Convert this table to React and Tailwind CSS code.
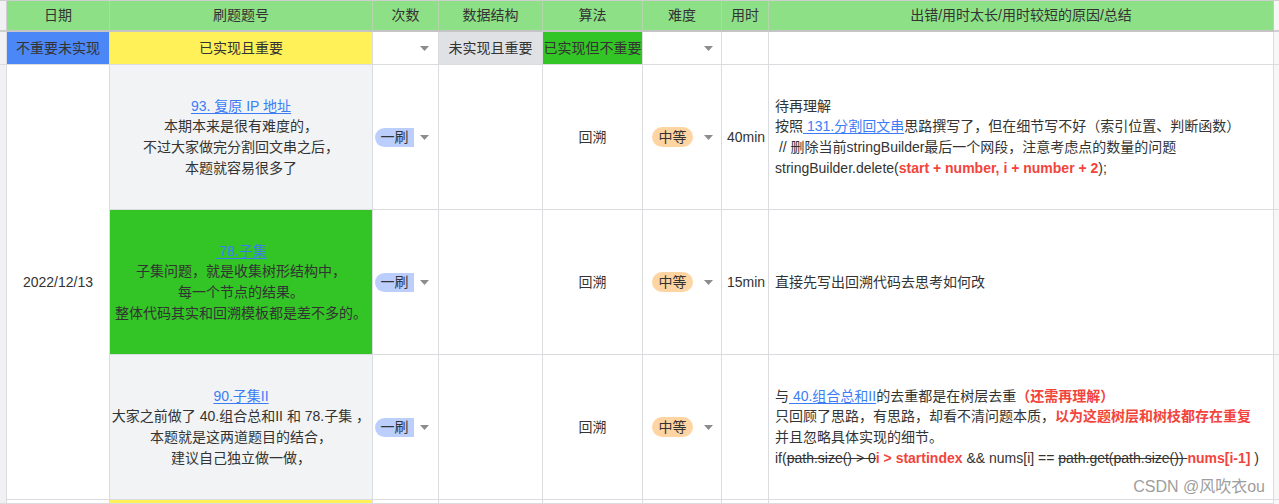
import React from 'react';

const FONT = "font-['Liberation_Sans','Noto_Sans_CJK_SC',sans-serif]";
const LINE = 'border-r border-b border-[#dadce0]';

const HEADERS = ['日期', '刷题题号', '次数', '数据结构', '算法', '难度', '用时', '出错/用时太长/用时较短的原因/总结'];

function Caret() {
  return (
    <svg width="9" height="5" viewBox="0 0 9 5" className="shrink-0">
      <polygon points="0,0 9,0 4.5,5" fill="#8c8c8c" />
    </svg>
  );
}

function Link({ children }) {
  return <span className="text-[#3c7df6] underline underline-offset-2">{children}</span>;
}

function Red({ children }) {
  return <span className="font-bold text-[#f2443c]">{children}</span>;
}

function Strike({ children }) {
  return <span className="line-through">{children}</span>;
}

function Times() {
  return (
    <div className={`${LINE} flex items-center justify-between pl-[2px] pr-[9px]`}>
      <span className="h-[19px] w-[39px] rounded-l-full bg-[#bccffc] flex items-center justify-center">一刷</span>
      <Caret />
    </div>
  );
}

function Level() {
  return (
    <div className={`${LINE} flex items-center justify-between pl-[9px] pr-[8px]`}>
      <span className="h-[20px] w-[41px] rounded-full bg-[#fed5a2] flex items-center justify-center">中等</span>
      <Caret />
    </div>
  );
}

const ROWS = [
  {
    bg: 'bg-[#f2f3f5]',
    problem: [<Link key="l">93. 复原 IP 地址</Link>, '本期本来是很有难度的，', '不过大家做完分割回文串之后，', '本题就容易很多了'],
    time: '40min',
    note: [
      '待再理解',
      <>按照<Link> 131.分割回文串</Link>思路撰写了，但在细节写不好（索引位置、判断函数）</>,
      '\u00a0// 删除当前stringBuilder最后一个网段，注意考虑点的数量的问题',
      <>stringBuilder.delete(<Red>start + number, i + number + 2</Red>);</>,
    ],
  },
  {
    bg: 'bg-[#33c425]',
    problem: [<Link key="l">&nbsp;78.子集</Link>, '子集问题，就是收集树形结构中，', '每一个节点的结果。', '整体代码其实和回溯模板都是差不多的。'],
    time: '15min',
    note: ['直接先写出回溯代码去思考如何改'],
  },
  {
    bg: 'bg-[#f2f3f5]',
    problem: [<Link key="l">90.子集II</Link>, '大家之前做了 40.组合总和II 和 78.子集 ，', '本题就是这两道题目的结合，', '建议自己独立做一做，'],
    time: '',
    note: [
      <>与<Link> 40.组合总和II</Link>的去重都是在树层去重<Red>（还需再理解）</Red></>,
      <>只回顾了思路，有思路，却看不清问题本质，<Red>以为这题树层和树枝都存在重复</Red></>,
      '并且忽略具体实现的细节。',
      <>if(<Strike>path.size() &gt; 0</Strike><Red>i &gt; startindex</Red> &amp;&amp; nums[i] == <Strike>path.get(path.size()) </Strike><Red>nums[i-1]</Red> )</>,
    ],
  },
];

export default function App() {
  return (
    <div className={`relative h-[504px] w-[1279px] overflow-hidden bg-white text-[14px] leading-[20.7px] text-[#333] ${FONT}`}>
      <div className="grid h-full grid-cols-[7px_103px_263px_66px_104px_100px_79px_47px_505px_5px] grid-rows-[32px_33px_145px_145px_145px_1fr]">
        {/* Header */}
        <div className="border-t border-b-2 border-r border-[#cfcfcf] bg-[#f1f1f3]" />
        {HEADERS.map(h => (
          <div
            key={h}
            className="flex items-center justify-center whitespace-nowrap border-t border-t-[#cfcfcf] border-b-2 border-b-[#c4c4c4] border-r border-r-[#b3d6ac] bg-[#8de086]"
          >
            {h}
          </div>
        ))}
        <div className="border-t border-b-2 border-[#cfcfcf] bg-[#f7f7f7]" />

        {/* Legend row */}
        <div className={`${LINE} bg-[#f1f1f3]`} />
        <div className={`${LINE} flex items-center justify-center whitespace-nowrap bg-[#4c87f8]`}>不重要未实现</div>
        <div className={`${LINE} flex items-center justify-center bg-[#fff157]`}>已实现且重要</div>
        <div className={`${LINE} flex items-center justify-end pr-[9px]`}><Caret /></div>
        <div className={`${LINE} flex items-center justify-center whitespace-nowrap bg-[#e0e1e5]`}>未实现且重要</div>
        <div className={`${LINE} flex items-center justify-center overflow-hidden whitespace-nowrap bg-[#33c425]`}>已实现但不重要</div>
        <div className={`${LINE} flex items-center justify-end pr-[8px]`}><Caret /></div>
        <div className={LINE} />
        <div className={LINE} />
        <div className="border-b border-[#dadce0] bg-[#f7f7f7]" />

        {/* Body */}
        <div className={`${LINE} row-span-4 bg-[#f1f1f3]`} />
        <div className={`${LINE} row-span-3 flex items-center justify-center`}>2022/12/13</div>
        {ROWS.map((r, i) => (
          <React.Fragment key={i}>
            <div className={`${LINE} ${r.bg} flex flex-col items-center justify-center whitespace-nowrap text-center`}>
              {r.problem.map((p, j) => <div key={j}>{p}</div>)}
            </div>
            <Times />
            <div className={LINE} />
            <div className={`${LINE} flex items-center justify-center`}>回溯</div>
            <Level />
            <div className={`${LINE} flex items-center pl-[5px]`}>{r.time}</div>
            <div className={`${LINE} flex flex-col justify-center whitespace-nowrap pl-[6px]`}>
              {r.note.map((n, j) => <div key={j}>{n}</div>)}
            </div>
            <div className="border-b border-[#dadce0] bg-[#f7f7f7]" />
          </React.Fragment>
        ))}

        {/* Next row, cut off */}
        <div className={`${LINE}`} />
        <div className={`${LINE} bg-[#fff157]`} />
        <div className={LINE} />
        <div className={LINE} />
        <div className={LINE} />
        <div className={LINE} />
        <div className={LINE} />
        <div className={LINE} />
        <div className="bg-[#f7f7f7]" />
      </div>

      <div className="absolute bottom-[6px] right-[14px] text-[16px] text-[#9e9e9e]">CSDN @风吹衣ou</div>
    </div>
  );
}
